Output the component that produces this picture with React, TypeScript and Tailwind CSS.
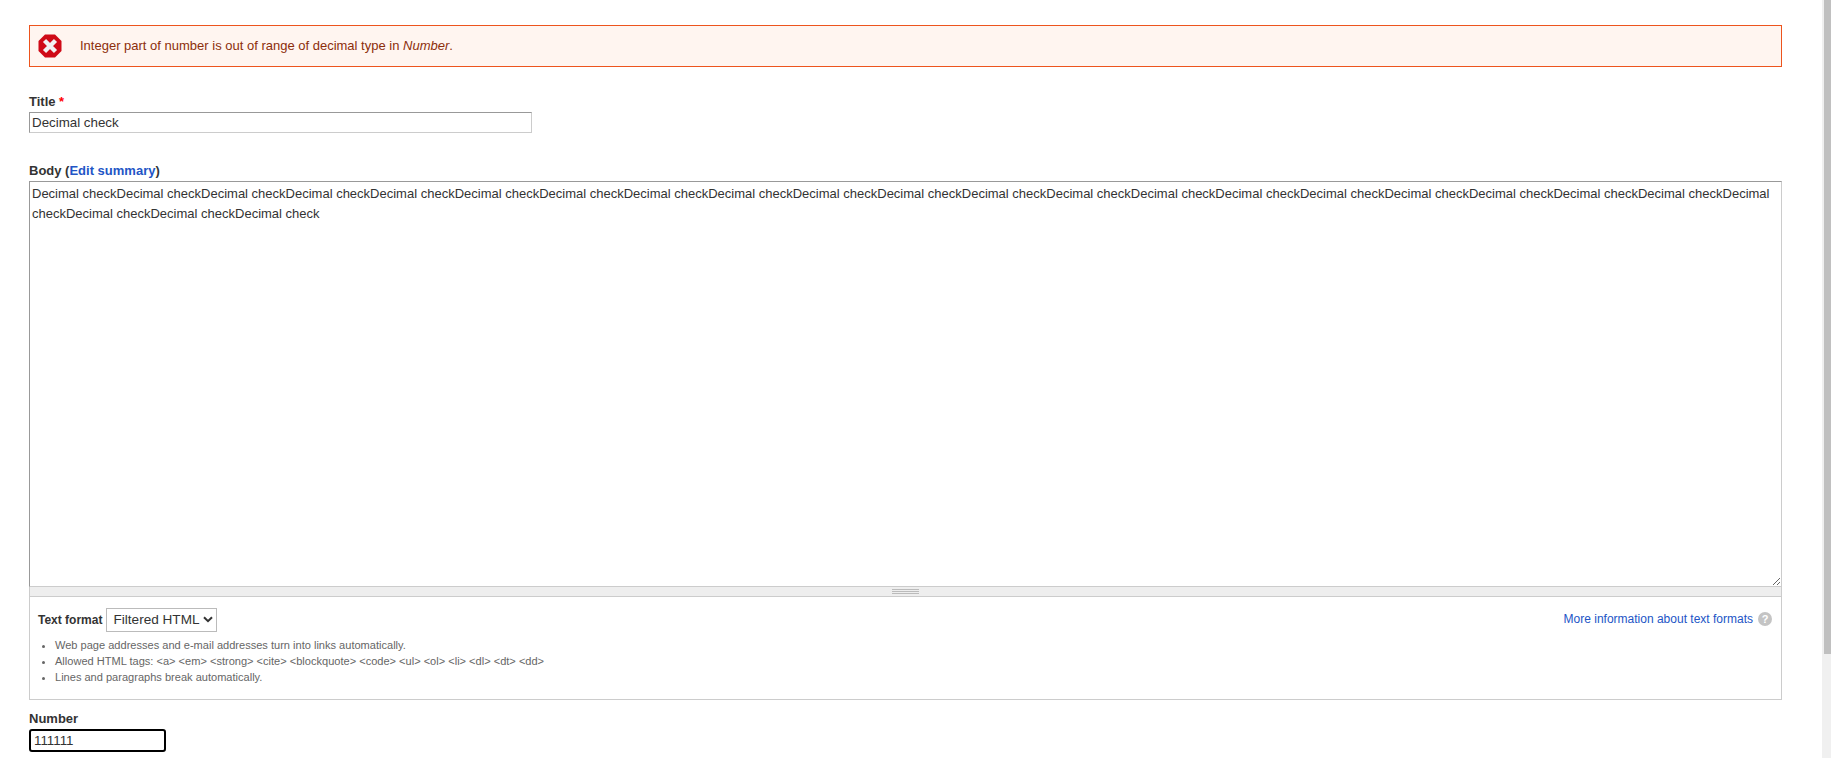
const bodyText = "Decimal check".repeat(24);

const tips = [
  "Web page addresses and e-mail addresses turn into links automatically.",
  "Allowed HTML tags: <a> <em> <strong> <cite> <blockquote> <code> <ul> <ol> <li> <dl> <dt> <dd>",
  "Lines and paragraphs break automatically.",
];

function ErrorIcon() {
  return (
    <svg width="24" height="24" viewBox="0 0 24 24" className="shrink-0">
      <polygon points="7,0.5 17,0.5 23.5,7 23.5,17 17,23.5 7,23.5 0.5,17 0.5,7" fill="#cf0a17" />
      <path d="M6.5 6.5L17.5 17.5M17.5 6.5L6.5 17.5" stroke="#f2f2f2" strokeWidth="4.4" />
    </svg>
  );
}

export default function App() {
  return (
    <div className="flex h-screen overflow-hidden bg-white font-['Liberation_Sans',Arial,sans-serif] text-[13px] text-[#333]">
      <main className="flex-1 pl-[29px] pr-[40px] pt-[25px]">
        <div className="flex h-[42px] items-center border border-[#ed541d] bg-[#fff5f0] pl-[8px] text-[#8c2e0b]">
          <ErrorIcon />
          <p className="ml-[18px]">
            Integer part of number is out of range of decimal type in <em>Number</em>.
          </p>
        </div>

        <label className="mt-[25px] block h-[20px] font-bold leading-[19px]">
          Title <span className="text-[#f00]">*</span>
        </label>
        <input
          readOnly
          value="Decimal check"
          className="block h-[21px] w-[503px] border border-[#ccc] border-t-[#999] border-l-[#999] px-[2px] text-[13.333px] outline-none"
        />

        <label className="mt-[28px] block h-[20px] font-bold leading-[20px]">
          Body (<a className="text-[#2255c6]">Edit summary</a>)
        </label>
        <textarea
          readOnly
          value={bodyText}
          className="block h-[406px] w-full border border-[#ccc] border-t-[#999] border-l-[#999] px-[2px] py-[2px] text-[13px] leading-[20px] outline-none"
        />
        <div className="flex h-[10px] justify-center border-x border-b border-[#ccc] bg-[#eee]">
          <div className="mt-[2px] h-[5px] w-[27px] border-y border-[#bbb]">
            <div className="mt-[1px] h-px bg-[#bbb]" />
          </div>
        </div>

        <div className="h-[103px] border-x border-b border-[#ccc] pl-[8px] pr-[9px] pt-[11px]">
          <div className="flex items-start justify-between">
            <div className="flex items-center gap-[4px]">
              <span className="text-[12px] font-bold">Text format</span>
              <div className="relative">
                <select className="block h-[24px] w-[111px] appearance-none border border-[#bbb] bg-white pl-[6px] text-[13.6px] text-[#333]">
                  <option>Filtered HTML</option>
                </select>
                <svg width="10" height="7" viewBox="0 0 10 7" className="pointer-events-none absolute right-[4px] top-[8px]">
                  <path d="M1 1.2L5 5.2L9 1.2" fill="none" stroke="#333" strokeWidth="2" />
                </svg>
              </div>
            </div>
            <div className="flex items-center gap-[5px] pt-[2px]">
              <a className="text-[12px] text-[#2255c6]">More information about text formats</a>
              <span className="flex h-[14px] w-[14px] items-center justify-center rounded-full bg-[#c4c4c4] text-[11px] font-bold text-white">
                ?
              </span>
            </div>
          </div>
          <ul className="mt-[5px] list-disc pl-[17px] text-[11.05px] leading-[16px] text-[#666]">
            {tips.map((tip) => (
              <li key={tip}>{tip}</li>
            ))}
          </ul>
        </div>

        <label className="mt-[9px] block h-[20px] font-bold leading-[20px]">Number</label>
        <input
          readOnly
          value="111111"
          className="block h-[23px] w-[137px] rounded-[3px] border-2 border-black px-[3px] text-[13.333px] outline-none"
        />
      </main>

      <div className="w-[9px] shrink-0 bg-[#f0f0f0] pl-[2px]">
        <div className="h-[654px] bg-[#c0c0c0]" />
      </div>
    </div>
  );
}
